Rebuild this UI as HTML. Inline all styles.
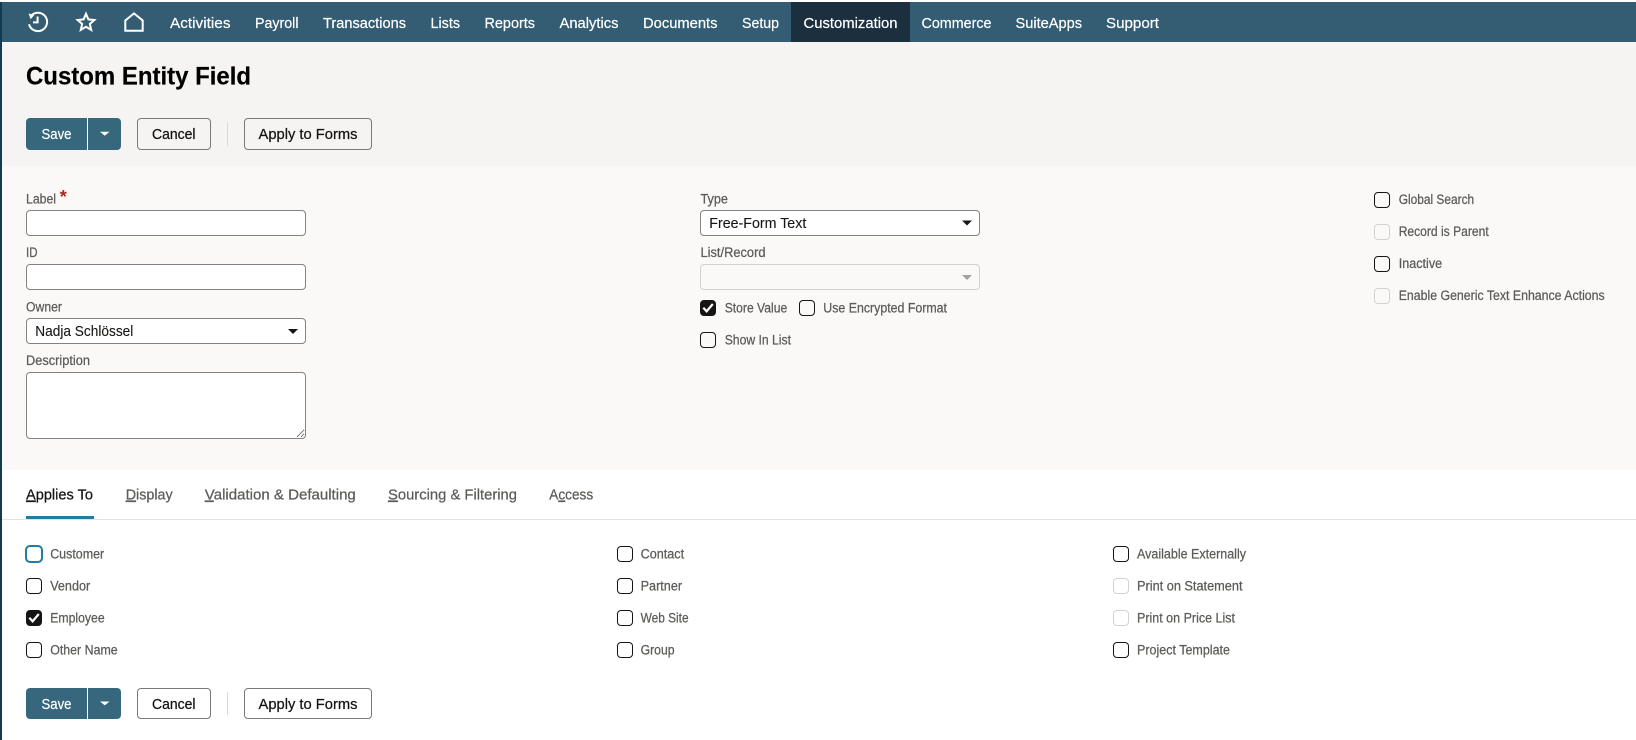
<!DOCTYPE html>
<html lang="en"><head><meta charset="utf-8"><title>Custom Entity Field</title>
<style>
html,body{margin:0;padding:0;width:1636px;height:740px;overflow:hidden;background:#fff}
body{position:relative;font-family:"Liberation Sans",sans-serif}
.a{position:absolute;box-sizing:border-box}
.f{background:#fff;border:1px solid #858380;border-radius:4px}
.b{background:transparent;border:1px solid #7b7976;border-radius:4px;height:32px}
.c{width:16px;height:16px;border:1.5px solid #161513;border-radius:4px;background:transparent}
.d{border:1px solid #d4d2cf;background:transparent}
.k{background:#161513}
svg.o{position:absolute;left:0;top:0}
text{font-family:"Liberation Sans",sans-serif}
.n{font-size:15px;fill:#fff;stroke:#fff;stroke-width:.2}
.l{font-size:13.5px;fill:#5c5b58;stroke:#5c5b58;stroke-width:.25}
.t{font-size:15px;fill:#161513;stroke:#161513;stroke-width:.1}
.u{font-size:15px;fill:#5c5b58;stroke:#5c5b58;stroke-width:.25}
.m{font-size:15px;fill:#161513;stroke:#161513;stroke-width:.25}
.s{font-size:15px;fill:#fff;stroke:#fff;stroke-width:.2}
</style></head><body>
<div class="a" style="left:0;top:2px;width:1636px;height:40px;background:#345d73"></div>
<div class="a" style="left:791px;top:2px;width:119px;height:40px;background:#1b2f3f"></div>
<div class="a" style="left:0;top:42px;width:1636px;height:124px;background:#f5f4f2"></div>
<div class="a" style="left:0;top:166px;width:1636px;height:304px;background:#fbf9f8"></div>
<div class="a" style="left:0;top:2px;width:2px;height:738px;background:#123a57"></div>

<div class="a" style="left:26px;top:118px;width:95px;height:32px;background:#36677d;border-radius:4px"></div>
<div class="a" style="left:87px;top:118px;width:1px;height:32px;background:#fff"></div>
<div class="a b" style="left:137px;top:118px;width:74px"></div>
<div class="a" style="left:227px;top:122px;width:1px;height:24px;background:#dcdad7"></div>
<div class="a b" style="left:244px;top:118px;width:128px"></div>

<div class="a f" style="left:26px;top:210px;width:280px;height:26px"></div>
<div class="a f" style="left:26px;top:264px;width:280px;height:26px"></div>
<div class="a f" style="left:26px;top:318px;width:280px;height:26px"></div>
<textarea class="a f" style="left:26px;top:372px;width:280px;height:67px;margin:0;outline:0"></textarea>
<div class="a f" style="left:700px;top:210px;width:280px;height:26px"></div>
<div class="a f d" style="left:700px;top:264px;width:280px;height:26px"></div>

<div class="a c k" style="left:700px;top:300px"></div>
<div class="a c" style="left:799px;top:300px"></div>
<div class="a c" style="left:700px;top:332px"></div>
<div class="a c" style="left:1374px;top:192px"></div>
<div class="a c d" style="left:1374px;top:224px"></div>
<div class="a c" style="left:1374px;top:256px"></div>
<div class="a c d" style="left:1374px;top:288px"></div>

<div class="a" style="left:2px;top:519px;width:1634px;height:1px;background:#e4e2df"></div>
<div class="a" style="left:26px;top:516px;width:68px;height:3px;background:#227e9e"></div>

<div class="a c" style="left:25px;top:545px;width:18px;height:18px;border:2px solid #227e9e;border-radius:5px"></div>
<div class="a c" style="left:26px;top:578px"></div>
<div class="a c k" style="left:26px;top:610px"></div>
<div class="a c" style="left:26px;top:642px"></div>
<div class="a c" style="left:617px;top:546px"></div>
<div class="a c" style="left:617px;top:578px"></div>
<div class="a c" style="left:617px;top:610px"></div>
<div class="a c" style="left:617px;top:642px"></div>
<div class="a c" style="left:1113px;top:546px"></div>
<div class="a c d" style="left:1113px;top:578px"></div>
<div class="a c d" style="left:1113px;top:610px"></div>
<div class="a c" style="left:1113px;top:642px"></div>

<div class="a" style="left:26px;top:688px;width:95px;height:31px;background:#36677d;border-radius:4px"></div>
<div class="a" style="left:87px;top:688px;width:1px;height:31px;background:#fff"></div>
<div class="a b" style="left:137px;top:688px;width:74px;height:31px"></div>
<div class="a" style="left:227px;top:692px;width:1px;height:23px;background:#dcdad7"></div>
<div class="a b" style="left:244px;top:688px;width:128px;height:31px"></div>

<svg class="o" width="1636" height="740" viewBox="0 0 1636 740">
<!-- nav icons -->
<g fill="none" stroke="#fff" stroke-width="2">
<path d="M31.5 15.3A9.2 9.2 0 1 1 29 24.2"/>
<path d="M37.6 16.5V22.4H33"/>
<path d="M86 13.8l2.4 5.6 6 .6-4.6 4 1.4 5.900-5.200-3.100-5.200 3.100 1.400-5.900-4.600-4 6-.6z"/>
<path d="M125.300 30.700V20.500L134 13.400l8.700 7.100V30.700z" stroke-linejoin="miter"/>
</g>
<path d="M28.600 13.500l5.600 1.600-3.600 4.200z" fill="#fff"/>
<!-- nav text -->
<text class="n" x="170" y="28" textLength="60.500" lengthAdjust="spacingAndGlyphs">Activities</text>
<text class="n" x="255" y="28" textLength="43.500" lengthAdjust="spacingAndGlyphs">Payroll</text>
<text class="n" x="323" y="28" textLength="83" lengthAdjust="spacingAndGlyphs">Transactions</text>
<text class="n" x="430.500" y="28" textLength="29.500" lengthAdjust="spacingAndGlyphs">Lists</text>
<text class="n" x="484.500" y="28" textLength="50.500" lengthAdjust="spacingAndGlyphs">Reports</text>
<text class="n" x="559.500" y="28" textLength="59" lengthAdjust="spacingAndGlyphs">Analytics</text>
<text class="n" x="643" y="28" textLength="74.500" lengthAdjust="spacingAndGlyphs">Documents</text>
<text class="n" x="742" y="28" textLength="37" lengthAdjust="spacingAndGlyphs">Setup</text>
<text class="n" x="803.500" y="28" textLength="94" lengthAdjust="spacingAndGlyphs">Customization</text>
<text class="n" x="921.500" y="28" textLength="70" lengthAdjust="spacingAndGlyphs">Commerce</text>
<text class="n" x="1015.500" y="28" textLength="66.500" lengthAdjust="spacingAndGlyphs">SuiteApps</text>
<text class="n" x="1106" y="28" textLength="53" lengthAdjust="spacingAndGlyphs">Support</text>
<text x="26" y="84.500" font-size="25" font-weight="700" fill="#000" stroke="#000" stroke-width=".2" textLength="225" lengthAdjust="spacingAndGlyphs">Custom Entity Field</text>
<!-- top buttons -->
<text class="s" x="41.500" y="139" textLength="30" lengthAdjust="spacingAndGlyphs">Save</text>
<path d="M100 131.800h9.500l-4.750 3.900z" fill="#fff"/>
<text class="m" x="152" y="139" textLength="43.500" lengthAdjust="spacingAndGlyphs">Cancel</text>
<text class="m" x="258.500" y="139" textLength="99" lengthAdjust="spacingAndGlyphs">Apply to Forms</text>
<!-- labels -->
<text class="l" x="26" y="203.500" textLength="30" lengthAdjust="spacingAndGlyphs">Label</text>
<text x="59.800" y="203" font-size="18" font-weight="700" fill="#b3261e">*</text>
<text class="l" x="26" y="257" textLength="11.500" lengthAdjust="spacingAndGlyphs">ID</text>
<text class="l" x="26" y="311.500" textLength="36" lengthAdjust="spacingAndGlyphs">Owner</text>
<text class="l" x="26" y="365" textLength="64" lengthAdjust="spacingAndGlyphs">Description</text>
<text class="t" x="35.300" y="336" textLength="98" lengthAdjust="spacingAndGlyphs">Nadja Schlössel</text>
<path d="M288 329h10l-5 5z" fill="#161513"/>
<text class="l" x="700.500" y="203.500" textLength="27.500" lengthAdjust="spacingAndGlyphs">Type</text>
<text class="t" x="709.300" y="228" textLength="97" lengthAdjust="spacingAndGlyphs">Free-Form Text</text>
<path d="M962 220.500h10l-5 5z" fill="#161513"/>
<text class="l" x="700.500" y="257" textLength="65" lengthAdjust="spacingAndGlyphs">List/Record</text>
<path d="M962 275h10l-5 5z" fill="#a3a19e"/>
<path d="M703.300 307.800l3.300 3.500 6.200-7.300" fill="none" stroke="#fff" stroke-width="2.200"/>
<text class="l" x="724.700" y="312.500" textLength="62.500" lengthAdjust="spacingAndGlyphs">Store Value</text>
<text class="l" x="823.300" y="312.500" textLength="123.700" lengthAdjust="spacingAndGlyphs">Use Encrypted Format</text>
<text class="l" x="724.700" y="344.500" textLength="66.300" lengthAdjust="spacingAndGlyphs">Show In List</text>
<text class="l" x="1398.700" y="204" textLength="75.500" lengthAdjust="spacingAndGlyphs">Global Search</text>
<text class="l" x="1398.700" y="236" textLength="90" lengthAdjust="spacingAndGlyphs">Record is Parent</text>
<text class="l" x="1398.700" y="268" textLength="43.500" lengthAdjust="spacingAndGlyphs">Inactive</text>
<text class="l" x="1398.700" y="300" textLength="206" lengthAdjust="spacingAndGlyphs">Enable Generic Text Enhance Actions</text>
<!-- tabs -->
<text class="m" x="26" y="499.500" textLength="67" lengthAdjust="spacingAndGlyphs"><tspan text-decoration="underline">A</tspan>pplies To</text>
<text class="u" x="125.700" y="499.500" textLength="47" lengthAdjust="spacingAndGlyphs"><tspan text-decoration="underline">D</tspan>isplay</text>
<text class="u" x="204.800" y="499.500" textLength="151" lengthAdjust="spacingAndGlyphs"><tspan text-decoration="underline">V</tspan>alidation &amp; Defaulting</text>
<text class="u" x="388" y="499.500" textLength="129" lengthAdjust="spacingAndGlyphs"><tspan text-decoration="underline">S</tspan>ourcing &amp; Filtering</text>
<text class="u" x="549.200" y="499.500" textLength="44" lengthAdjust="spacingAndGlyphs">A<tspan text-decoration="underline">c</tspan>cess</text>
<!-- applies -->
<text class="l" x="50.200" y="558.500" textLength="54" lengthAdjust="spacingAndGlyphs">Customer</text>
<text class="l" x="50.200" y="590.500" textLength="40" lengthAdjust="spacingAndGlyphs">Vendor</text>
<path d="M29.300 617.800l3.300 3.500 6.200-7.300" fill="none" stroke="#fff" stroke-width="2.200"/>
<text class="l" x="50.200" y="622.500" textLength="54.500" lengthAdjust="spacingAndGlyphs">Employee</text>
<text class="l" x="50.200" y="654.500" textLength="67.500" lengthAdjust="spacingAndGlyphs">Other Name</text>
<text class="l" x="640.600" y="558.500" textLength="43.500" lengthAdjust="spacingAndGlyphs">Contact</text>
<text class="l" x="640.600" y="590.500" textLength="41.500" lengthAdjust="spacingAndGlyphs">Partner</text>
<text class="l" x="640.600" y="622.500" textLength="48" lengthAdjust="spacingAndGlyphs">Web Site</text>
<text class="l" x="640.600" y="654.500" textLength="34" lengthAdjust="spacingAndGlyphs">Group</text>
<text class="l" x="1137" y="558.500" textLength="109" lengthAdjust="spacingAndGlyphs">Available Externally</text>
<text class="l" x="1137" y="590.500" textLength="105.500" lengthAdjust="spacingAndGlyphs">Print on Statement</text>
<text class="l" x="1137" y="622.500" textLength="98" lengthAdjust="spacingAndGlyphs">Print on Price List</text>
<text class="l" x="1137" y="654.500" textLength="93" lengthAdjust="spacingAndGlyphs">Project Template</text>
<!-- bottom buttons -->
<text class="s" x="41.500" y="709" textLength="30" lengthAdjust="spacingAndGlyphs">Save</text>
<path d="M100 701.500h9.500l-4.750 3.900z" fill="#fff"/>
<text class="m" x="152" y="709" textLength="43.500" lengthAdjust="spacingAndGlyphs">Cancel</text>
<text class="m" x="258.500" y="709" textLength="99" lengthAdjust="spacingAndGlyphs">Apply to Forms</text>
</svg>
</body></html>
